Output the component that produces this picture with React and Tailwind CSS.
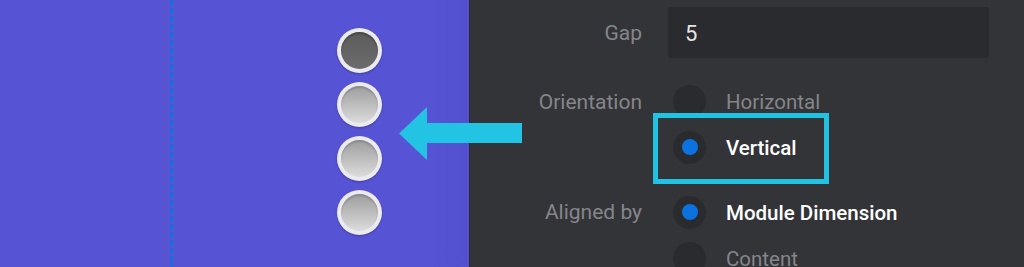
import React from "react";

function Dot({ active }) {
  return (
    <div className="w-[45px] h-[45px] rounded-full bg-[#ebebef] p-[4px] shadow-[0_1px_2px_rgba(0,0,0,0.25)]">
      {active ? (
        <div className="w-full h-full rounded-full bg-gradient-to-b from-[#5c5c5c] to-[#6c6c6c] shadow-[inset_0_2px_2px_rgba(0,0,0,0.25)]" />
      ) : (
        <div className="w-full h-full rounded-full bg-gradient-to-b from-[#9e9e9e] to-[#dcdcdc] shadow-[inset_0_2px_2px_rgba(0,0,0,0.15)]" />
      )}
    </div>
  );
}

function Radio({ label, checked, bold }) {
  return (
    <div className="h-[46px] flex items-center">
      <div className="ml-[5px] w-[33px] h-[33px] rounded-full bg-[#2a2b2f] flex items-center justify-center">
        {checked && <div className="w-[16px] h-[16px] rounded-full bg-[#0b72e0]" />}
      </div>
      <span
        className={
          "ml-[20px] pt-[3px] text-[20.5px] leading-none whitespace-nowrap " +
          (bold ? "text-white font-medium" : "text-[#85868a]")
        }
      >
        {label}
      </span>
    </div>
  );
}

export default function App() {
  return (
    <div
      className="relative w-[1024px] h-[267px] flex overflow-hidden"
      style={{ fontFamily: "Roboto, 'Liberation Sans', sans-serif" }}
    >
      {/* Left preview panel */}
      <div className="w-[469px] h-full bg-gradient-to-r from-[#5653d4] via-[#5653d4] via-[92%] to-[#5451d0] flex shrink-0">
        <div className="ml-[170px] w-[3px] h-full bg-[repeating-linear-gradient(to_bottom,#1a6ed8_0px,#1a6ed8_6px,transparent_6px,transparent_8px)]" />
        <div className="ml-[164px] pt-[28px] flex flex-col gap-[9px]">
          <Dot active />
          <Dot />
          <Dot />
          <Dot />
        </div>
      </div>

      {/* Right settings panel */}
      <div className="flex-1 h-full bg-[#333438] border-l border-[#2b2c30] pt-[7px] pr-[35px]">
        <div className="grid grid-cols-[172px_1fr] gap-x-[26px]">
          <div className="h-[51px] pt-[3px] flex items-center justify-end text-[21px] text-[#85868a]">Gap</div>
          <div className="h-[51px] rounded-[3px] bg-[#2a2b2f] flex items-center pl-[17px] pt-[2px] text-[22px] text-[#e4e4e6]">
            5
          </div>

          <div className="mt-[20px] h-[46px] pt-[3px] flex items-center justify-end text-[21px] text-[#85868a]">
            Orientation
          </div>
          <div className="mt-[20px] flex flex-col">
            <Radio label="Horizontal" />
            <Radio label="Vertical" checked bold />
          </div>

          <div className="mt-[19px] h-[46px] pt-[2px] flex items-center justify-end text-[21px] text-[#85868a]">
            Aligned by
          </div>
          <div className="mt-[19px] flex flex-col">
            <Radio label="Module Dimension" checked bold />
            <Radio label="Content" />
          </div>
        </div>
      </div>

      {/* Highlight box annotation */}
      <div className="absolute left-[653px] top-[113px] w-[176px] h-[71px] border-[5px] border-[#22c3e2]" />

      {/* Arrow annotation */}
      <svg
        className="absolute left-[399px] top-[107px]"
        width="123"
        height="53"
        viewBox="0 0 123 53"
      >
        <polygon points="0,26.5 28,0 28,16 123,16 123,36 28,36 28,53" fill="#22c3e3" />
      </svg>
    </div>
  );
}
